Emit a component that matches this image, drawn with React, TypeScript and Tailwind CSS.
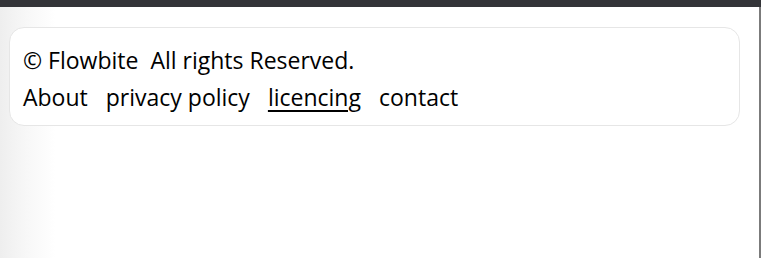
const links = [
  { label: "About", href: "#" },
  { label: "privacy policy", href: "#" },
  { label: "licencing", href: "#", active: true },
  { label: "contact", href: "#" },
];

export default function App() {
  return (
    <div className="flex h-[258px] w-full flex-col bg-white font-['Open_Sans',sans-serif] text-black">
      <div className="h-[7px] w-full bg-[#333438]" />
      <div className="flex flex-1">
        <main className="flex-1 bg-[linear-gradient(to_right,#eeeeee_0px,#f7f7f7_25px,#ffffff_55px)] px-[9px] pt-[20px]">
          <footer className="w-[731px] rounded-[15px] border border-[#e6e6e6] bg-white px-[13px] pt-[14px] pb-[9px]">
            <p className="text-[23px] leading-[37px]">© Flowbite&nbsp; All rights Reserved.</p>
            <nav className="flex gap-[18px] text-[23px] leading-[37px]">
              {links.map((link) => (
                <a key={link.label} href={link.href} className={link.active ? "underline underline-offset-[4px]" : ""}>
                  {link.label}
                </a>
              ))}
            </nav>
          </footer>
        </main>
        <div className="w-[2px] bg-[#7b7b7b]" />
      </div>
    </div>
  );
}
